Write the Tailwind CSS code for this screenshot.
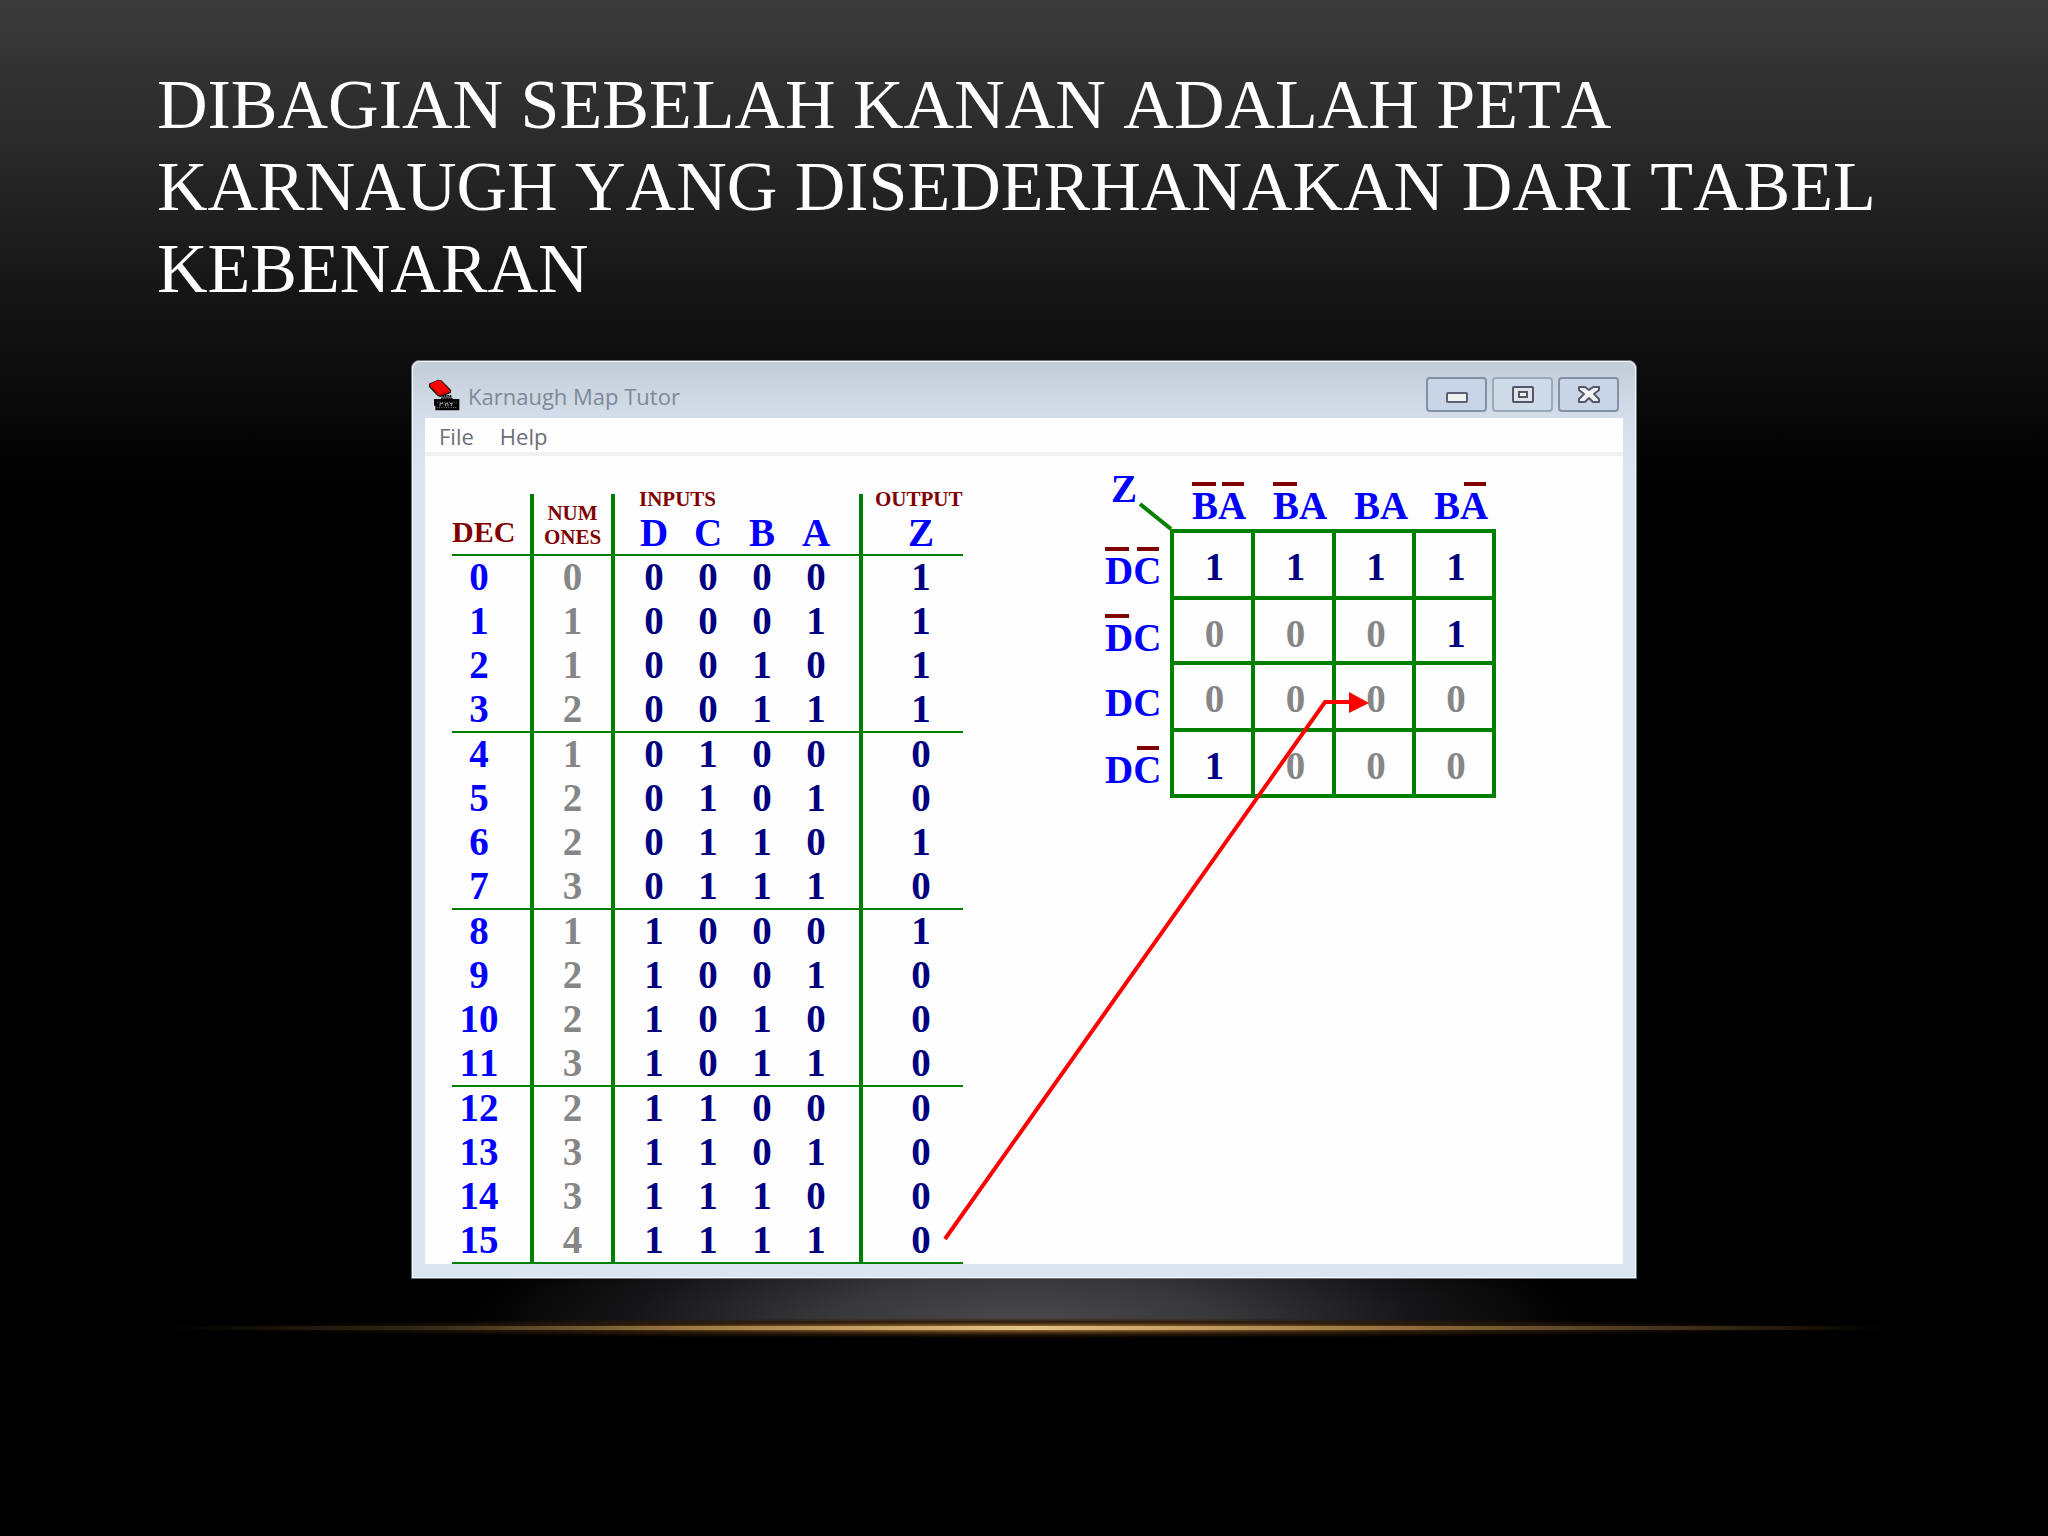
<!DOCTYPE html>
<html lang="id">

<head>
  <meta charset="UTF-8">
  <meta name="viewport" content="width=device-width, initial-scale=1.0">
  <title>Karnaugh Map Tutor</title>
  <script src="https://cdn.jsdelivr.net/npm/@tailwindcss/browser@4"></script>
</head>

<body class="min-h-screen overflow-x-hidden bg-black bg-[linear-gradient(to_bottom,#3b3b3b_0px,#2a2a2a_140px,#181818_270px,#000_490px)] bg-no-repeat font-['Liberation_Serif',serif] [font-kerning:none]">

  <header class="pt-16 pl-[157px] pr-[150px]">
    <h1 class="text-[70px] leading-[82px] text-white uppercase">Dibagian sebelah kanan adalah peta Karnaugh yang disederhanakan dari tabel kebenaran</h1>
  </header>

  <main class="mt-[50px]">
    <!-- Jendela aplikasi -->
    <section class="mx-auto max-w-[1226px] rounded-t-lg border border-[#6d7278] bg-[#dae5f1]">
      <div class="rounded-t-lg border border-[#f4f8fc] bg-[linear-gradient(to_bottom,#c2cdd8_0px,#d3deea_56px,#dae5f1_110px)] px-3 pb-[13px]">

        <!-- Bilah judul -->
        <div class="flex h-14 items-start justify-between pr-1 pl-[3px]">
          <div class="flex items-center gap-2 pt-4">
            <svg class="h-8 w-8" viewBox="12 12 96 96">
              <path d="M30 72 H106 V106 H34 V92 H30 Z" fill="#000" />
              <path d="M52 72 L58 62 H80 L84 72 Z" fill="#555" stroke="#000" stroke-width="4" stroke-dasharray="5 3" />
              <path d="M15 26 L42 14 L52 16 L82 46 L80 54 L50 66 L42 64 L15 36 Z" fill="#000" />
              <path d="M18 27 L44 15 L50 17 L79 47 L76 52 L49 62 L43 60 L18 34 Z" fill="#f00" />
              <path d="M19 30 L47 58 L77 48" stroke="#b00000" stroke-width="3" fill="none" />
              <path d="M40 82 H98 M38 98 H98" stroke="#8b8b8b" stroke-width="3" stroke-dasharray="3 4" fill="none" />
              <path d="M48 94 V86 H58 M64 94 V86 H72 V94 M78 86 H86 M82 86 V94" stroke="#aaa" stroke-width="3" fill="none" />
            </svg>
            <span class="pt-0.5 font-['Open_Sans',sans-serif] text-[22px] leading-8 text-[#7d8998]">Karnaugh Map Tutor</span>
          </div>
          <div class="flex gap-[5px] pt-[15px]">
            <button type="button" aria-label="Minimize" class="flex h-[35px] w-[61px] items-center justify-center rounded border-2 border-[#8391a6] bg-[#c9d5e6]">
              <svg class="h-5 w-6" viewBox="0 0 24 20"><rect x="2" y="8" width="20" height="9" rx="1" fill="#f1f2ee" stroke="#5b6072" stroke-width="2" /></svg>
            </button>
            <button type="button" aria-label="Maximize" class="flex h-[35px] w-[61px] items-center justify-center rounded border-2 border-[#9aa9bc] bg-[#cfdbe9]">
              <svg class="h-5 w-6" viewBox="0 0 24 20">
                <rect x="2" y="2" width="20" height="15" rx="1" fill="#e3e2e6" stroke="#53576b" stroke-width="2" />
                <rect x="8" y="7" width="8" height="5" fill="#eef0f4" stroke="#53576b" stroke-width="2" />
              </svg>
            </button>
            <button type="button" aria-label="Close" class="flex h-[35px] w-[61px] items-center justify-center rounded border-2 border-[#8391a6] bg-[#c9d5e6]">
              <svg class="h-5 w-6" viewBox="0 0 24 20"><path d="M2 2 H8 L12 5 L16 2 H22 V5 L17 9 L22 14 V17 H16 L12 13 L8 17 H2 V14 L7 9 L2 5 Z" fill="#f1f2f4" stroke="#53576b" stroke-width="2" stroke-linejoin="round" /></svg>
            </button>
          </div>
        </div>

        <div class="bg-[#fefefe]">
          <!-- Menu -->
          <nav class="flex h-[38px] items-start gap-[26px] border-b-4 border-[#f0f0f0] pl-3.5 font-['Open_Sans',sans-serif] text-[22px] leading-9 text-[#6c6f78]">
            <button type="button">File</button>
            <button type="button">Help</button>
          </nav>

          <div class="relative flex items-start pl-[27px]">
            <!-- Tabel kebenaran -->
            <table class="mt-[38px] w-[511px] shrink-0 table-fixed border-separate border-spacing-0 text-center text-[39px] leading-[42px] font-bold">
              <colgroup>
                <col class="w-[82px]">
                <col class="w-[81px]">
                <col class="w-[66px]">
                <col class="w-[54px]">
                <col class="w-[54px]">
                <col class="w-[74px]">
                <col class="w-[100px]">
              </colgroup>
              <thead class="text-[#800000]">
                <tr class="h-5">
                  <th rowspan="2" class="border-r-4 border-b-2 border-[#008000] pb-2.5 text-left align-bottom text-[30px] leading-6">DEC</th>
                  <th rowspan="2" class="border-r-4 border-b-2 border-[#008000] pb-[5px] align-bottom text-[21px] leading-6">NUM<br>ONES</th>
                  <th colspan="4" class="border-r-4 border-[#008000] pl-6 text-left align-top text-[21px] leading-[10px]">INPUTS</th>
                  <th class="pl-3 text-left align-top text-[21px] leading-[10px]">OUTPUT</th>
                </tr>
                <tr class="h-[42px] align-top leading-[38px] text-[#0000ff]">
                  <th class="border-b-2 border-[#008000] pl-3">D</th>
                  <th class="border-b-2 border-[#008000]">C</th>
                  <th class="border-b-2 border-[#008000]">B</th>
                  <th class="border-r-4 border-b-2 border-[#008000] pr-4">A</th>
                  <th class="border-b-2 border-[#008000] pl-4">Z</th>
                </tr>
              </thead>
              <tbody id="truth-table"></tbody>
            </table>

            <!-- Peta Karnaugh -->
            <table class="mt-3.5 ml-[142px] w-[391px] shrink-0 table-fixed border-separate border-spacing-0 text-[39px] leading-10 font-bold">
              <colgroup>
                <col class="w-[65px]">
                <col class="w-[81px]">
                <col class="w-[81px]">
                <col class="w-[80px]">
                <col class="w-[84px]">
              </colgroup>
              <thead class="text-[#0000ff]">
                <tr class="h-[59px]">
                  <th class="relative pl-1.5 text-left align-top leading-[38px]">Z
                    <svg class="absolute right-0 bottom-0 h-[26px] w-8 overflow-visible" viewBox="0 0 32 26"><path d="M2 1 L33 26" stroke="#008000" stroke-width="4" /></svg>
                  </th>
                  <th class="pb-[3px] pl-[22px] align-bottom"><div class="flex">
                    <span class="relative pt-1 before:absolute before:top-0 before:left-0 before:h-1 before:w-6 before:bg-[#800000]">B</span>
                    <span class="relative pt-1 before:absolute before:top-0 before:left-1 before:h-1 before:w-[22px] before:bg-[#800000]">A</span>
                  </div></th>
                  <th class="pb-[3px] pl-[22px] align-bottom"><div class="flex">
                    <span class="relative pt-1 before:absolute before:top-0 before:left-0 before:h-1 before:w-6 before:bg-[#800000]">B</span>
                    <span class="pt-1">A</span>
                  </div></th>
                  <th class="pb-[3px] pl-[22px] align-bottom"><div class="flex">
                    <span class="pt-1">B</span>
                    <span class="pt-1">A</span>
                  </div></th>
                  <th class="pb-[3px] pl-[22px] align-bottom"><div class="flex">
                    <span class="pt-1">B</span>
                    <span class="relative pt-1 before:absolute before:top-0 before:left-1 before:h-1 before:w-[22px] before:bg-[#800000]">A</span>
                  </div></th>
                </tr>
              </thead>
              <tbody id="karnaugh-map"></tbody>
            </table>

            <!-- Panah dari baris 15 ke sel DCBA -->
            <svg class="pointer-events-none absolute top-0 left-0 h-[808px] w-[1000px]" viewBox="0 0 1000 808">
              <path d="M520 783 L900 246 H926" fill="none" stroke="#f00" stroke-width="4" />
              <path d="M924 236 L944 247 L924 257 Z" fill="#f00" />
            </svg>
          </div>
        </div>
      </div>
    </section>

    <!-- Garis cahaya -->
    <div class="h-[45px] bg-[radial-gradient(ellipse_560px_130px_at_50%_100%,#4a494c_0%,#38373a_35%,#161618_70%,transparent_100%)]"></div>
    <div class="-mt-2 h-6 bg-[radial-gradient(ellipse_800px_10px_at_50%_50%,#a88248_0%,#7c5a2a_25%,#2c1a08_60%,transparent_100%)]"></div>
    <div class="-mt-3.5 h-1 bg-[linear-gradient(to_right,transparent_8%,#2c2412_20%,#a07c46_34%,#e6c483_50%,#a07c46_66%,#4a361e_80%,transparent_92%)]"></div>
  </main>

  <script>
    // Nilai keluaran Z untuk baris desimal 0 sampai 15
    const outputs = [1, 1, 1, 1, 0, 0, 1, 0, 1, 0, 0, 0, 0, 0, 0, 0];

    const truthTable = document.getElementById('truth-table');
    outputs.forEach((z, dec) => {
      const bits = dec.toString(2).padStart(4, '0').split('');
      const ones = bits.filter((bit) => bit === '1').length;
      // Garis pemisah setiap empat baris
      const last = dec % 4 === 3;
      const line = last ? 'border-b-2' : '';

      truthTable.innerHTML += `
        <tr class="${last ? 'h-[45px]' : 'h-11'} align-top text-[#000080]">
          <td class="${line} border-r-4 border-[#008000] pr-6 text-[#0000ff]">${dec}</td>
          <td class="${line} border-r-4 border-[#008000] text-[#868686]">${ones}</td>
          <td class="${line} border-[#008000] pl-3">${bits[0]}</td>
          <td class="${line} border-[#008000]">${bits[1]}</td>
          <td class="${line} border-[#008000]">${bits[2]}</td>
          <td class="${line} border-r-4 border-[#008000] pr-4">${bits[3]}</td>
          <td class="${line} border-[#008000] pl-4">${z}</td>
        </tr>`;
    });

    // Baris peta: garis atas pada D dan C, lalu isi sel
    const mapRows = [
      { notD: true, notC: true, cells: [1, 1, 1, 1], height: 'h-[67px]' },
      { notD: true, notC: false, cells: [0, 0, 0, 1], height: 'h-[65px]' },
      { notD: false, notC: false, cells: [0, 0, 0, 0], height: 'h-[67px]' },
      { notD: false, notC: true, cells: [1, 0, 0, 0], height: 'h-[70px]' },
    ];

    const map = document.getElementById('karnaugh-map');
    mapRows.forEach((row, r) => {
      const cells = row.cells.map((value, c) => `
        <td class="border-t-4 border-l-4 border-[#008000] pt-3.5 pl-1 text-center
          ${c === 3 ? 'border-r-4' : ''} ${r === 3 ? 'border-b-4' : ''}
          ${value ? 'text-[#000080]' : 'text-[#868686]'}">${value}</td>`).join('');

      map.innerHTML += `
        <tr class="${row.height} align-top">
          <th class="pt-[18px] text-[#0000ff]"><div class="flex">
            <span class="relative pt-1 ${row.notD ? 'before:absolute before:top-0 before:left-0 before:h-1 before:w-6 before:bg-[#800000]' : ''}">D</span>
            <span class="relative pt-1 ${row.notC ? 'before:absolute before:top-0 before:left-1 before:h-1 before:w-[22px] before:bg-[#800000]' : ''}">C</span>
          </div></th>
          ${cells}
        </tr>`;
    });
  </script>
</body>

</html>
